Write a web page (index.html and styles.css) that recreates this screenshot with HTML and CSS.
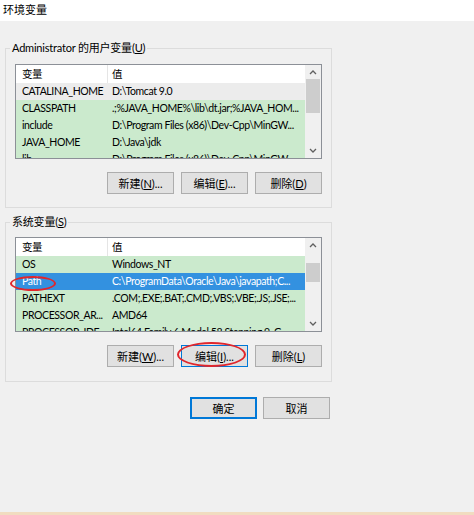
FILE: index.html
```html
<!DOCTYPE html>
<html lang="zh-CN">
<head>
  <meta charset="UTF-8">
  <meta name="viewport" content="width=device-width, initial-scale=1.0">
  <title>环境变量</title>
  <link rel="stylesheet" href="styles.css">
</head>
<body>

  <div class="titlebar">环境变量</div>

  <div class="dialog">

    <fieldset class="group user">
      <legend>Administrator 的用户变量(<u>U</u>)</legend>
      <div class="list">
        <div class="rows">
          <div class="row head"><span class="name">变量</span><span class="value">值</span></div>
          <div class="row grey"><span class="name">CATALINA_HOME</span><span class="value">D:\Tomcat 9.0</span></div>
          <div class="row green"><span class="name">CLASSPATH</span><span class="value">.;%JAVA_HOME%\lib\dt.jar;%JAVA_HOM...</span></div>
          <div class="row green"><span class="name">include</span><span class="value">D:\Program Files (x86)\Dev-Cpp\MinGW...</span></div>
          <div class="row green"><span class="name">JAVA_HOME</span><span class="value">D:\Java\jdk</span></div>
          <div class="row green"><span class="name">lib</span><span class="value">D:\Program Files (x86)\Dev-Cpp\MinGW...</span></div>
        </div>
        <div class="scrollbar">
          <svg class="arrow" width="16" height="14" viewBox="0 0 16 14"><polyline points="5,9 8,6 11,9" /></svg>
          <div class="track"><div class="thumb thumb-user"></div></div>
          <svg class="arrow" width="16" height="14" viewBox="0 0 16 14"><polyline points="5,5 8,8 11,5" /></svg>
        </div>
      </div>
      <div class="buttons">
        <button>新建(<u>N</u>)...</button>
        <button>编辑(<u>E</u>)...</button>
        <button>删除(<u>D</u>)</button>
      </div>
    </fieldset>

    <fieldset class="group system">
      <legend>系统变量(<u>S</u>)</legend>
      <div class="list">
        <div class="rows">
          <div class="row head"><span class="name">变量</span><span class="value">值</span></div>
          <div class="row green"><span class="name">OS</span><span class="value">Windows_NT</span></div>
          <div class="row selected"><span class="name">Path</span><span class="value">C:\ProgramData\Oracle\Java\javapath;C...</span></div>
          <div class="row green"><span class="name">PATHEXT</span><span class="value">.COM;.EXE;.BAT;.CMD;.VBS;.VBE;.JS;.JSE;...</span></div>
          <div class="row green"><span class="name">PROCESSOR_AR...</span><span class="value">AMD64</span></div>
          <div class="row green"><span class="name">PROCESSOR_IDE...</span><span class="value">Intel64 Family 6 Model 58 Stepping 9, G...</span></div>
        </div>
        <div class="scrollbar">
          <svg class="arrow" width="16" height="14" viewBox="0 0 16 14"><polyline points="5,9 8,6 11,9" /></svg>
          <div class="track"><div class="thumb thumb-system"></div></div>
          <svg class="arrow" width="16" height="14" viewBox="0 0 16 14"><polyline points="5,5 8,8 11,5" /></svg>
        </div>
      </div>
      <div class="buttons">
        <button>新建(<u>W</u>)...</button>
        <button class="focused">编辑(<u>I</u>)...</button>
        <button>删除(<u>L</u>)</button>
      </div>
    </fieldset>

    <div class="buttons footer">
      <button class="default">确定</button>
      <button>取消</button>
    </div>

  </div>

  <div class="strip"></div>

  <!-- red marks drawn over the dialog -->
  <div class="mark mark-path"></div>
  <div class="mark mark-edit"></div>

</body>
</html>
```

FILE: styles.css
```css
body {
  margin: 0;
  height: 515px;
  display: flex;
  flex-direction: column;
  background-color: #f0f0f0;
  font-family: Lato, "Noto Sans CJK SC", sans-serif;
  font-size: 11px;
  color: #000;
  position: relative;
  overflow: hidden;
}
.titlebar {
  height: 21px;
  line-height: 20px;
  padding-left: 3px;
  background-color: #fff;
  font-size: 11px;
}
.dialog {
  width: 327px;
  margin-left: 5px;
}
.group {
  margin: 0;
  padding: 9px 9px 13px 9px;
  border: 1px solid #dcdcdc;
  min-width: 0;
}
.group.user {
  margin-top: 20px;
}
.group.system {
  margin-top: 7px;
  padding-top: 8px;
  padding-bottom: 14px;
}
legend {
  padding: 0 2px;
  margin-left: -5px;
  line-height: 14px;
  height: 14px;
  letter-spacing: -0.2px;
}
.list {
  display: flex;
  height: 93px;
  border: 1px solid #8c9097;
  background-color: #fff;
  overflow: hidden;
}
.rows {
  flex: 1;
  min-width: 0;
  font-size: 10.5px;
  letter-spacing: -0.4px;
}
.row {
  display: flex;
  height: 17px;
  line-height: 17px;
  white-space: nowrap;
}
.row.head {
  height: 18px;
  line-height: 18px;
  background-color: #fff;
}
.row.grey {
  background-color: #ececec;
}
.row.green {
  background-color: #cbeacd;
}
.row.selected {
  background-color: #3391e0;
  color: #fff;
}
.name {
  width: 86px;
  padding-left: 6px;
  overflow: hidden;
}
.head .name {
  border-right: 1px solid #e5e5e5;
  width: 85px;
}
.value {
  flex: 1;
  padding-left: 4px;
  overflow: hidden;
}
.scrollbar {
  width: 16px;
  display: flex;
  flex-direction: column;
  background-color: #f0f0f0;
}
.arrow {
  display: block;
  flex: none;
}
.arrow polyline {
  fill: none;
  stroke: #606060;
  stroke-width: 1.3;
}
.track {
  flex: 1;
  padding: 0 1px;
}
.thumb {
  background-color: #cdcdcd;
}
.thumb-user {
  height: 34px;
}
.thumb-system {
  margin-top: 11px;
  height: 19px;
}
.buttons {
  display: flex;
  justify-content: flex-end;
  gap: 7px;
  margin-top: 13px;
}
button {
  width: 67px;
  height: 22px;
  padding: 0;
  font-family: inherit;
  font-size: 11px;
  color: #000;
  background-color: #e1e1e1;
  border: 1px solid #adadad;
}
button.focused {
  border-color: #0078d7;
}
button.default {
  border: 2px solid #0078d7;
}
.footer {
  margin-top: 15px;
  padding-right: 2px;
  gap: 6px;
}
.strip {
  margin-top: auto;
  height: 3px;
  background-color: #f1dcc0;
}
.mark {
  position: absolute;
  border: 2px solid #e0262c;
  border-radius: 50%;
  box-sizing: border-box;
}
.mark-path {
  left: 10px;
  top: 276px;
  width: 46px;
  height: 15px;
}
.mark-edit {
  left: 177px;
  top: 342px;
  width: 69px;
  height: 25px;
}
```
